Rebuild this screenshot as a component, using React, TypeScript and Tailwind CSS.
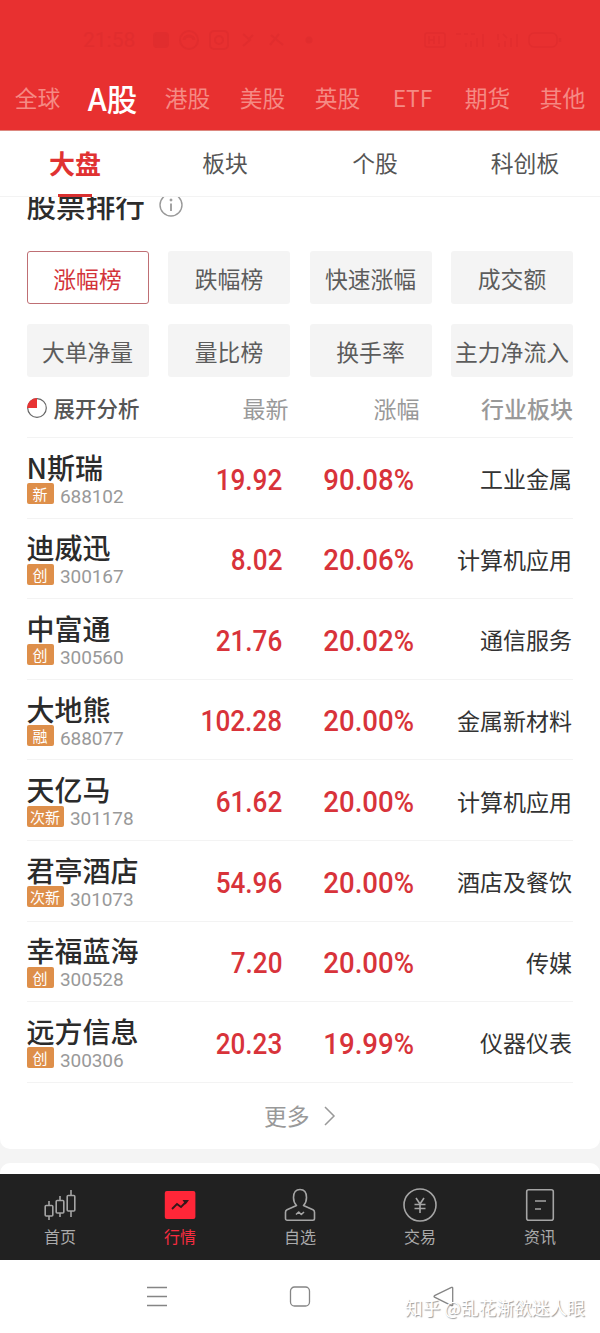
import type { ReactNode } from 'react';
import clsx from 'clsx';

const markets = ['全球', 'A股', '港股', '美股', '英股', 'ETF', '期货', '其他'];
const sections = ['大盘', '板块', '个股', '科创板'];
const rankings = ['涨幅榜', '跌幅榜', '快速涨幅', '成交额', '大单净量', '量比榜', '换手率', '主力净流入'];

const stocks = [
  { name: 'N斯瑞', tag: '新', code: '688102', price: '19.92', change: '90.08%', sector: '工业金属' },
  { name: '迪威迅', tag: '创', code: '300167', price: '8.02', change: '20.06%', sector: '计算机应用' },
  { name: '中富通', tag: '创', code: '300560', price: '21.76', change: '20.02%', sector: '通信服务' },
  { name: '大地熊', tag: '融', code: '688077', price: '102.28', change: '20.00%', sector: '金属新材料' },
  { name: '天亿马', tag: '次新', code: '301178', price: '61.62', change: '20.00%', sector: '计算机应用' },
  { name: '君亭酒店', tag: '次新', code: '301073', price: '54.96', change: '20.00%', sector: '酒店及餐饮' },
  { name: '幸福蓝海', tag: '创', code: '300528', price: '7.20', change: '20.00%', sector: '传媒' },
  { name: '远方信息', tag: '创', code: '300306', price: '20.23', change: '19.99%', sector: '仪器仪表' },
];

const StatusBar = () => (
  <div className="flex h-20 items-center pr-[36px] pl-[83px] text-[#e12d2e]">
    <span className="w-[54px] font-[Roboto] text-[21px] leading-none">21:58</span>
    <svg className="ml-[14px]" width="170" height="22" viewBox="0 0 170 22" fill="none" stroke="currentColor" strokeWidth="2">
      <rect x="3" y="4" width="14" height="14" rx="3" fill="currentColor" />
      <circle cx="38" cy="11" r="9" />
      <path d="M33 11a5 4 0 0 1 10 0" strokeWidth="3" />
      <rect x="59" y="2" width="18" height="18" rx="4" />
      <circle cx="68" cy="11" r="4" />
      <path d="m92 5 7 6-7 6M102 6l-5 5" />
      <path d="m120 6 12 10M128 5l-9 11" />
      <circle cx="158" cy="11" r="2.5" fill="currentColor" />
    </svg>
    <svg className="ml-auto" width="140" height="18" viewBox="0 0 140 18" fill="none" stroke="currentColor" strokeWidth="1.5">
      <rect x="1" y="2" width="20" height="14" rx="2" />
      <path d="M5 5v8M10 5v8M15 5v8M5 9h5" />
      <path d="M32 3h5M40 3h4M47 3h4M42 16v-4M47 16v-6M53 16V7M59 16V3" />
      <path d="M74 3v6M79 3l4 4M75 16v-4M81 16v-6M87 16V7M93 16V3" />
      <rect x="105" y="2" width="28" height="14" rx="5" />
      <path d="M136 7v4" strokeWidth="2.5" />
    </svg>
  </div>
);

const Header = () => (
  <header className="h-[131px] shrink-0 border-b border-[#dc8880] bg-[#e83030]">
    <StatusBar />
    <nav className="grid h-9 grid-cols-8">
      {markets.map((market) => (
        <span
          key={market}
          className={clsx(
            'flex items-center justify-center whitespace-nowrap leading-none',
            market === 'A股' ? 'text-[30.5px] font-medium text-white' : 'text-[22.8px] text-[#f58a84]',
          )}
        >
          {market}
        </span>
      ))}
    </nav>
  </header>
);

const SectionTabs = () => (
  <nav className="relative grid h-[66px] shrink-0 grid-cols-4 border-b border-[#f3f3f3] bg-white">
    {sections.map((section, i) => (
      <span
        key={section}
        className={clsx(
          'flex items-center justify-center leading-none',
          i === 0 ? 'pb-[2px] text-[26px] font-bold text-[#e03232]' : 'pb-px text-[22.8px] text-[#555]',
        )}
      >
        {section}
      </span>
    ))}
    <i className="absolute -bottom-px left-[58px] h-[3px] w-[34px] bg-[#d93030]" />
  </nav>
);

const Title = () => (
  <div className="flex h-[54px] items-start overflow-hidden">
    <h2 className="-mt-[8px] text-[29.6px] leading-[32px] font-medium text-[#2c2c2c]">股票排行</h2>
    <svg className="-mt-[4.5px] ml-[14.5px]" width="24" height="24" viewBox="0 0 24 24" fill="none" stroke="#999" strokeWidth="1.4">
      <circle cx="12" cy="12" r="11" />
      <path d="M12 10.5V18" strokeWidth="1.8" />
      <circle cx="12" cy="7" r="1" fill="#999" strokeWidth="1" />
    </svg>
  </div>
);

const Rankings = () => (
  <div className="grid grid-cols-4 gap-x-[19.5px] gap-y-5">
    {rankings.map((ranking, i) => (
      <button
        key={ranking}
        className={clsx(
          'flex h-[53px] items-center justify-center rounded-[3px] pt-[3px] text-[22.8px] leading-none whitespace-nowrap',
          i === 0 ? 'border border-[#bf6f74] bg-white text-[#d3343a]' : 'bg-[#f4f4f4] text-[#5c5c5c]',
        )}
      >
        {ranking}
      </button>
    ))}
  </div>
);

const TableHead = () => (
  <div className="flex h-[61px] items-center border-b border-[#f3f3f3] pt-[2px] text-[23px] leading-none text-[#999]">
    <svg className="-mt-px" width="20" height="22" viewBox="0 0 20 22" fill="none">
      <circle cx="10" cy="11" r="9.3" stroke="#666" strokeWidth="1.2" />
      <path d="M10 11V1A10 10 0 0 0 0 11z" fill="#e83333" />
    </svg>
    <span className="ml-[7px] w-[120px] text-[21.5px] font-medium text-[#555]">展开分析</span>
    <span className="w-[115px] text-right">最新</span>
    <span className="w-[131px] text-right">涨幅</span>
    <span className="flex-1 text-right font-medium">行业板块</span>
  </div>
);

const StockRow = ({ stock }: { stock: (typeof stocks)[number] }) => (
  <div className="flex h-[80.6px] items-center border-b border-[#f3f3f3] pt-[2px] leading-none">
    <div className="w-[140px] shrink-0">
      <div className="text-[28px] leading-[30px] font-medium whitespace-nowrap text-[#2b2b2b]">{stock.name}</div>
      <div className="flex items-center">
        <span
          className={clsx(
            'flex h-[21px] items-center justify-center rounded-[2px] bg-[#de8f4a] text-[15px] text-white',
            stock.tag.length > 1 ? 'w-[37px]' : 'w-[27px]',
          )}
        >
          {stock.tag}
        </span>
        <span className="ml-[6.5px] pt-[5px] font-[Roboto] text-[19px] tracking-[-0.1px] text-[#999]">{stock.code}</span>
      </div>
    </div>
    <div className="flex w-[115.5px] justify-end pt-[3px]">
      <span className="origin-right scale-x-[0.885] font-[Roboto] text-[29.5px] font-medium text-[#d8333a]">{stock.price}</span>
    </div>
    <div className="flex w-[131.5px] justify-end pt-[3px]">
      <span className="origin-right scale-x-[0.935] font-[Roboto] text-[29.5px] font-medium text-[#d8333a]">{stock.change}</span>
    </div>
    <div className="flex-1 pr-px text-right text-[23px] text-[#333]">{stock.sector}</div>
  </div>
);

const CandlesIcon = () => (
  <svg width="36" height="36" viewBox="0 0 36 36" fill="none" stroke="#a5a5a5" strokeWidth="1.6">
    <path d="M7 13v4M7 28v4M18 8v4M18 25v4M29 2v5M29 23v6" />
    <rect x="3.2" y="17.5" width="7.6" height="10.5" rx="1" />
    <rect x="14.2" y="12.5" width="7.6" height="12.5" rx="1" />
    <rect x="25.2" y="7.5" width="7.6" height="15.5" rx="1" />
  </svg>
);

const MarketIcon = () => (
  <svg width="36" height="36" viewBox="0 0 36 36" fill="none">
    <rect x="2.8" y="3" width="30.6" height="28" rx="2" fill="#ff2638" />
    <path d="m10 21 5-5 4 3 6-6" stroke="#35171a" strokeWidth="1.8" />
    <path d="M20.5 12H27l-3.5 4.5z" fill="#35171a" />
  </svg>
);

const UserIcon = () => (
  <svg width="36" height="36" viewBox="0 0 36 36" fill="none" stroke="#a5a5a5" strokeWidth="1.6" strokeLinejoin="round">
    <path d="M14.5 17.5C12.5 15.5 11.5 13 11.5 9.5c0-5 2.500-8 6.500-8s6.500 3 6.500 8c0 3.500-1 6-3 8l9.500 4.300c1 .5 1.500 1.200 1.500 2.400v6.300c0 1-.7 1.700-1.700 1.700H5.200c-1 0-1.700-.7-1.700-1.700v-6.300c0-1.200.5-1.900 1.500-2.400z" />
    <path d="m14 26.5 2.700-2.500 2.600 2.500 2.700-2.500" />
  </svg>
);

const TradeIcon = () => (
  <svg width="36" height="36" viewBox="0 0 36 36" fill="none" stroke="#a5a5a5" strokeWidth="1.6">
    <circle cx="18" cy="17" r="16" />
    <path d="m14 10 4 6 4-6M18 16v9M12.5 16.5h11M12.5 20.5h11" />
  </svg>
);

const NewsIcon = () => (
  <svg width="36" height="36" viewBox="0 0 36 36" fill="none" stroke="#a5a5a5" strokeWidth="1.6">
    <rect x="4.7" y="1.7" width="26.6" height="30.6" rx="2" />
    <path d="M13 13h11M13 21h6" />
  </svg>
);

const navItems: { label: string; icon: ReactNode; active?: boolean }[] = [
  { label: '首页', icon: <CandlesIcon /> },
  { label: '行情', icon: <MarketIcon />, active: true },
  { label: '自选', icon: <UserIcon /> },
  { label: '交易', icon: <TradeIcon /> },
  { label: '资讯', icon: <NewsIcon /> },
];

const BottomNav = () => (
  <nav className="grid h-[86px] shrink-0 grid-cols-5 bg-[#212121]">
    {navItems.map((item) => (
      <div key={item.label} className="flex flex-col items-center pt-[14px]">
        {item.icon}
        <span
          className={clsx('mt-[3px] text-[16px] leading-[18px]', item.active ? 'text-[#f92c40]' : 'text-[#aaa]')}
        >
          {item.label}
        </span>
      </div>
    ))}
  </nav>
);

const SystemBar = () => (
  <div className="relative h-[73px] shrink-0 bg-white">
    <div className="flex h-full items-center pl-[146px]">
      <svg width="310" height="22" viewBox="0 0 310 22" fill="none" stroke="#858585" strokeWidth="1.3">
        <path d="M1 1.5h20M1 10.5h20M1 19.5h20" />
        <rect x="144.5" y="1" width="19" height="19" rx="4" />
        <path d="m288.5 9.7 17-8.3c.7-.3 1.2 0 1.2.7v16.8c0 .7-.5 1-1.2.7l-17-8.5c-.6-.3-.6-1 0-1.400z" />
      </svg>
    </div>
    {/* Watermark */}
    <span className="absolute top-[36px] left-[405px] text-[17.7px] leading-[22px] whitespace-nowrap text-white [text-shadow:1px_1px_1px_#999]">
      知乎 @乱花渐欲迷人眼
    </span>
  </div>
);

export default function App() {
  return (
    <div className="flex h-[1333px] w-[600px] flex-col overflow-hidden bg-[#f4f4f4] font-['Noto_Sans_CJK_SC',sans-serif]">
      <Header />
      <SectionTabs />
      <main className="flex h-[977px] shrink-0 flex-col gap-[14px] overflow-hidden">
        <section className="h-[952px] shrink-0 rounded-b-[10px] bg-white pr-[27px] pl-[26.5px]">
          <Title />
          <Rankings />
          <TableHead />
          {stocks.map((stock) => (
            <StockRow key={stock.code} stock={stock} />
          ))}
          <div className="flex h-[66px] items-center justify-center pt-px text-[22.8px] leading-none text-[#999]">
            <span>更多</span>
            <svg className="ml-[14px]" width="12" height="20" viewBox="0 0 12 20" fill="none" stroke="#999" strokeWidth="1.5">
              <path d="m1 1 9 9-9 9" />
            </svg>
          </div>
        </section>
        <section className="h-8 shrink-0 rounded-t-[10px] bg-white" />
      </main>
      <BottomNav />
      <SystemBar />
    </div>
  );
}
